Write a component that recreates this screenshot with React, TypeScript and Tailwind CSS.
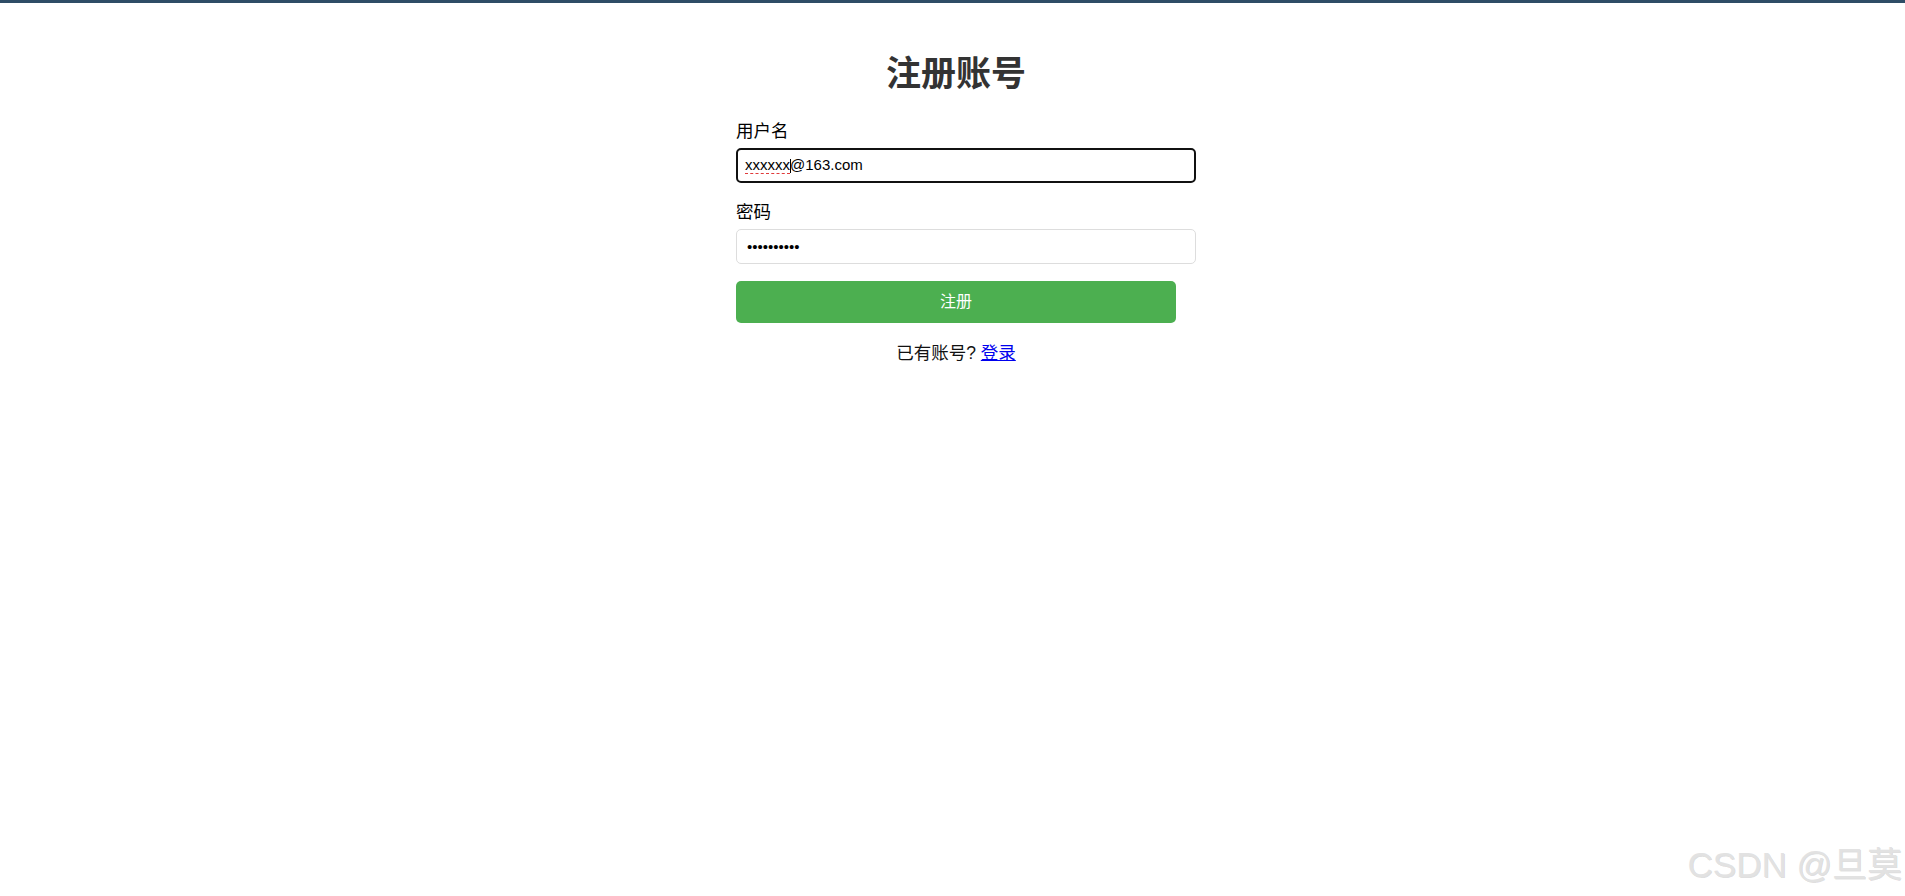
import React from 'react';

const CJK = "font-['Liberation_Sans','Noto_Sans_CJK_SC',sans-serif]";

export default function App() {
  return (
    <div className={`relative min-h-screen bg-white border-t-[3px] border-[#2e4d66] ${CJK}`}>
      <div className="flex justify-center pl-[7px]">
        <div className="w-[440px] pt-[50px]">
          <h2 className="text-center text-[35px] leading-[42px] font-bold text-[#333333]">注册账号</h2>

          <form className="flex flex-col" onSubmit={(e) => e.preventDefault()}>
            {/* 用户名 — focused field */}
            <label className="mt-[24px] text-[17.5px] leading-[24px] text-black">用户名</label>
            <div className="mt-[5px] flex h-[35px] w-[460px] items-center rounded-[5px] border-2 border-[#111111] pl-[7px] text-[15px] text-black">
              <span className="underline decoration-dashed decoration-[#e03b3b] decoration-1 underline-offset-[3px]">
                xxxxxx
              </span>
              <span className="inline-block h-[14px] w-px -mr-px bg-black" />
              <span>@163.com</span>
            </div>

            {/* 密码 */}
            <label className="mt-[17px] text-[17.5px] leading-[24px] text-black">密码</label>
            <input
              type="password"
              readOnly
              value="1234567890"
              className="mt-[5px] h-[35px] w-[460px] rounded-[5px] border border-[#dddddd] px-[10px] text-[15px] text-black outline-none"
            />

            <button
              type="submit"
              className="mt-[17px] h-[42px] w-[440px] rounded-[5px] bg-[#4caf50] text-[16px] text-white"
            >
              注册
            </button>
          </form>

          <p className="mt-[18px] text-center text-[17.5px] leading-[24px] text-[#111111]">
            已有账号? <a href="#" className="text-[#0000ee] underline">登录</a>
          </p>
        </div>
      </div>

      {/* watermark */}
      <div className="absolute right-[3px] top-[844px] text-[35px] leading-none text-[#e2e2e2] [text-shadow:1px_1px_0_rgba(0,0,0,0.14)]">
        CSDN @旦莫
      </div>
    </div>
  );
}
